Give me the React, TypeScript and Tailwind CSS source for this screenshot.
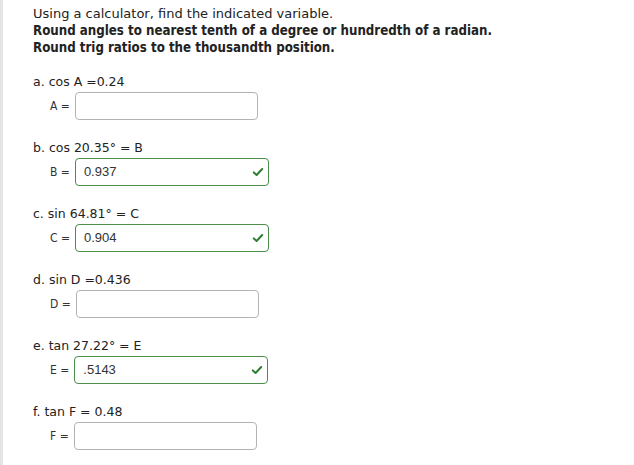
import React from 'react'

type Item = {
  letter: string
  prompt: string
  variable: string
  answer?: string
}

const ITEMS: Item[] = [
  { letter: 'a.', prompt: 'cos A =0.24', variable: 'A' },
  { letter: 'b.', prompt: 'cos 20.35° = B', variable: 'B', answer: '0.937' },
  { letter: 'c.', prompt: 'sin 64.81° = C', variable: 'C', answer: '0.904' },
  { letter: 'd.', prompt: 'sin D =0.436', variable: 'D' },
  { letter: 'e.', prompt: 'tan 27.22° = E', variable: 'E', answer: '.5143' },
  { letter: 'f.', prompt: 'tan F = 0.48', variable: 'F' },
]

function Check() {
  return (
    <svg width="12" height="10" viewBox="0 0 12 10" className="shrink-0">
      <path d="M1.8 5.4 L4.6 8 L10.2 2" fill="none" stroke="#2f7f32" strokeWidth="2" strokeLinecap="round" strokeLinejoin="round" />
    </svg>
  )
}

function AnswerRow({ item }: { item: Item }) {
  const filled = item.answer !== undefined
  return (
    <div className="flex items-center gap-[5px] pl-[17px] mt-[2px]">
      <span className="text-[12px] text-[#333] font-['DejaVu_Sans_Condensed','DejaVu_Sans',sans-serif]">{item.variable} =</span>
      {filled ? (
        <div className="h-[28px] w-[194px] rounded-[4px] border border-[#4b8f4b] flex items-center justify-between pl-[8px] pr-[4px]">
          <span className="text-[13px] text-[#333] font-['Liberation_Sans',Arial,sans-serif]">{item.answer}</span>
          <Check />
        </div>
      ) : (
        <div className="h-[28px] w-[183px] rounded-[4px] border border-[#b3b3b3]" />
      )}
    </div>
  )
}

export default function App() {
  return (
    <div className="min-h-screen bg-white flex font-['DejaVu_Sans',sans-serif] text-[#222]">
      <div className="w-[3px] bg-[#e4e4e4] shrink-0" />
      <div className="pl-[30px] pt-[5px]">
        <div className="text-[13px] leading-[17px]">
          <p>Using a calculator, find the indicated variable.</p>
          <p className="font-bold text-[13.2px] font-['DejaVu_Sans_Condensed','DejaVu_Sans',sans-serif]">
            Round angles to nearest tenth of a degree or hundredth of a radian.
          </p>
          <p className="font-bold text-[13.2px] font-['DejaVu_Sans_Condensed','DejaVu_Sans',sans-serif]">
            Round trig ratios to the thousandth position.
          </p>
        </div>
        <div className="mt-[17px]">
          {ITEMS.map((item) => (
            <div key={item.letter} className="mb-[19px]">
              <p className="text-[12.5px] leading-[17px]">
                {item.letter} {item.prompt}
              </p>
              <AnswerRow item={item} />
            </div>
          ))}
        </div>
      </div>
    </div>
  )
}
